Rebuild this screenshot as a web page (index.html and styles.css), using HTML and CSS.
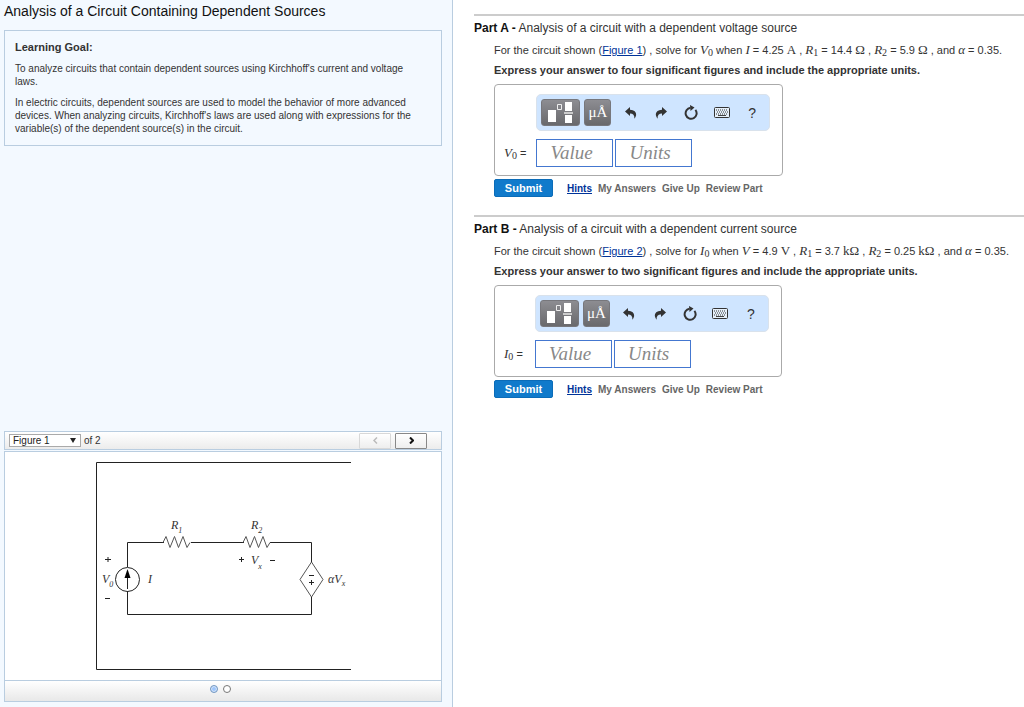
FILE: index.html
```html
<!DOCTYPE html>
<html lang="en">
<head>
  <meta charset="UTF-8" />
  <meta name="viewport" content="width=device-width, initial-scale=1.0"/>
  <title>Analysis of a Circuit Containing Dependent Sources</title>
  <link rel="stylesheet" href="styles.css">
</head>
<body>
<!-- shared toolbar icons -->
<svg class="sprite" aria-hidden="true">
  <symbol id="icon-template" viewBox="0 0 27 21">
    <path d="M1 8h8v12H1zM18 0h7v9h-7zM18 13h7v8h-7z" fill="#fff"/>
    <path d="M17 11h9" stroke="#ccc" stroke-width="2"/>
    <path d="M10.500 2.500h4v5h-4z" fill="none" stroke="#eee"/>
  </symbol>
  <symbol id="icon-undo" viewBox="0 0 12 12">
    <path d="M0 4.500L5 0v2.700c4 .1 6.600 2.300 6.100 5.600-.2 1.300-.8 2.500-1.700 3.500.3-3.400-1.300-5.200-4.400-5.200V9z" fill="#333"/>
  </symbol>
  <symbol id="icon-redo" viewBox="0 0 12 12">
    <path d="M12 4.500L7 0v2.700C3 2.800.4 5 .9 8.300c.2 1.300.8 2.500 1.700 3.500C2.300 8.400 3.900 6.600 7 6.600V9z" fill="#333"/>
  </symbol>
  <symbol id="icon-reset" viewBox="0 0 14 15">
    <path d="M11.400 4.800A5.500 5.500 0 1 1 6.500 2.800" fill="none" stroke="#333" stroke-width="2"/>
    <path d="M6 0l4.500 2.500L6.500 6z" fill="#333"/>
  </symbol>
  <symbol id="icon-keyboard" viewBox="0 0 16 11">
    <rect x=".5" y=".5" width="15" height="10" rx="1" fill="#e6f0fa" stroke="#333"/>
    <path d="M2 3h12M3 5h11M2 7h12" stroke="#333" stroke-dasharray="1 1"/>
    <path d="M4 8.500h8" stroke="#444"/>
  </symbol>
</svg>

<aside class="intro">
  <h1>Analysis of a Circuit Containing Dependent Sources</h1>
  <section class="goal">
    <h2>Learning Goal:</h2>
    <p>To analyze circuits that contain dependent sources using Kirchhoff's current and voltage laws.</p>
    <p>In electric circuits, dependent sources are used to model the behavior of more advanced devices. When analyzing circuits, Kirchhoff's laws are used along with expressions for the variable(s) of the dependent source(s) in the circuit.</p>
  </section>

  <section class="viewer">
    <div class="viewer-bar">
      <span class="select-wrap">
        <select id="figure" aria-label="Figure">
          <option>Figure 1</option>
          <option>Figure 2</option>
        </select>
      </span>
      <label for="figure">of 2</label>
      <button type="button" class="nav prev" aria-label="Previous figure" disabled>
        <svg width="5" height="7" viewBox="0 0 5 7"><path d="M4 .5l-3 3 3 3" fill="none" stroke="currentColor" stroke-width="1.500"/></svg>
      </button>
      <button type="button" class="nav next" aria-label="Next figure">
        <svg width="5" height="7" viewBox="0 0 5 7"><path d="M1 .5l3 3-3 3" fill="none" stroke="currentColor" stroke-width="2"/></svg>
      </button>
    </div>
    <div class="viewer-body">
      <svg class="circuit" width="255" height="208" viewBox="0 0 255 208">
        <path class="frame" d="M255 .5H.5v207H255"/>
        <!-- wires -->
        <path class="wire" d="M31.500 105V80.500H68M95 80.500h53M174 80.500h41.500V100M215.500 135v17.500h-184V129"/>
        <!-- resistors -->
        <path class="part" d="M67 80.500l3-6 4 11 4.500-11 4 11 4.500-11 4 11 3-5"/>
        <path class="part" d="M147 80.500l3-6 4 11 4.500-11 4 11 4.500-11 4 11 3-5"/>
        <!-- current source -->
        <circle class="wire" cx="31.500" cy="117.500" r="12"/>
        <path class="wire" d="M31.500 127v-16"/>
        <path d="M31.500 107l3 9h-6z"/>
        <!-- dependent source -->
        <path class="part" d="M215.500 100l11.500 17.500-11.500 17.500-11.500-17.500z"/>
        <path class="wire" d="M213 113.500h5M213 120.500h5M215.500 118v5"/>
        <!-- polarity marks -->
        <path class="wire" d="M9 97.500h6M12 95v5M9 136.500h5M143 97.500h5M145.500 95v5M174 98.500h5"/>
        <text x="75" y="67">R<tspan class="sub" dy="4">1</tspan></text>
        <text x="155" y="67">R<tspan class="sub" dy="4">2</tspan></text>
        <text x="155" y="102">V<tspan class="sub" dy="5">x</tspan></text>
        <text x="6" y="121">V<tspan class="sub" dy="4">0</tspan></text>
        <text x="52" y="121">I</text>
        <text x="232" y="121">αV<tspan class="sub" dy="3">x</tspan></text>
      </svg>
    </div>
    <div class="viewer-foot">
      <input type="radio" name="page" aria-label="Figure 1" checked>
      <input type="radio" name="page" aria-label="Figure 2">
    </div>
  </section>
</aside>

<main class="parts">
  <form class="part-item">
    <h2><b>Part A -</b> Analysis of a circuit with a dependent voltage source</h2>
    <p>For the circuit shown (<a href="#figure">Figure 1</a>) , solve for <var>V<sub>0</sub></var> when <var>I</var> = 4.25 <span class="unit">A</span> , <var>R<sub>1</sub></var> = 14.4 <span class="unit">Ω</span> , <var>R<sub>2</sub></var> = 5.9 <span class="unit">Ω</span> , and <var>α</var> = 0.35.</p>
    <p class="ask">Express your answer to four significant figures and include the appropriate units.</p>
    <div class="answer">
      <div class="toolbar">
        <button type="button" class="tool wide" aria-label="Templates"><svg width="27" height="21"><use href="#icon-template"/></svg></button>
        <button type="button" class="tool">μÅ</button>
        <button type="button" class="icon" aria-label="Undo"><svg width="12" height="12"><use href="#icon-undo"/></svg></button>
        <button type="button" class="icon" aria-label="Redo"><svg width="12" height="12"><use href="#icon-redo"/></svg></button>
        <button type="button" class="icon" aria-label="Reset"><svg width="14" height="15"><use href="#icon-reset"/></svg></button>
        <button type="button" class="icon" aria-label="Keyboard shortcuts"><svg width="16" height="11"><use href="#icon-keyboard"/></svg></button>
        <button type="button" class="icon">?</button>
      </div>
      <label for="valueA"><var>V<sub>0</sub></var> =</label>
      <div class="fields">
        <input type="text" id="valueA" placeholder="Value">
        <input type="text" aria-label="Units" placeholder="Units">
      </div>
    </div>
    <div class="actions">
      <button type="submit" class="btn">Submit</button>
      <a href="#" class="hints">Hints</a>
      <a href="#">My Answers</a>
      <a href="#">Give Up</a>
      <a href="#">Review Part</a>
    </div>
  </form>

  <form class="part-item">
    <h2><b>Part B -</b> Analysis of a circuit with a dependent current source</h2>
    <p>For the circuit shown (<a href="#figure">Figure 2</a>) , solve for <var>I<sub>0</sub></var> when <var>V</var> = 4.9 <span class="unit">V</span> , <var>R<sub>1</sub></var> = 3.7 <span class="unit">kΩ</span> , <var>R<sub>2</sub></var> = 0.25 <span class="unit">kΩ</span> , and <var>α</var> = 0.35.</p>
    <p class="ask">Express your answer to two significant figures and include the appropriate units.</p>
    <div class="answer">
      <div class="toolbar">
        <button type="button" class="tool wide" aria-label="Templates"><svg width="27" height="21"><use href="#icon-template"/></svg></button>
        <button type="button" class="tool">μÅ</button>
        <button type="button" class="icon" aria-label="Undo"><svg width="12" height="12"><use href="#icon-undo"/></svg></button>
        <button type="button" class="icon" aria-label="Redo"><svg width="12" height="12"><use href="#icon-redo"/></svg></button>
        <button type="button" class="icon" aria-label="Reset"><svg width="14" height="15"><use href="#icon-reset"/></svg></button>
        <button type="button" class="icon" aria-label="Keyboard shortcuts"><svg width="16" height="11"><use href="#icon-keyboard"/></svg></button>
        <button type="button" class="icon">?</button>
      </div>
      <label for="valueB"><var>I<sub>0</sub></var> =</label>
      <div class="fields">
        <input type="text" id="valueB" placeholder="Value">
        <input type="text" aria-label="Units" placeholder="Units">
      </div>
    </div>
    <div class="actions">
      <button type="submit" class="btn">Submit</button>
      <a href="#" class="hints">Hints</a>
      <a href="#">My Answers</a>
      <a href="#">Give Up</a>
      <a href="#">Review Part</a>
    </div>
  </form>
</main>
</body>
</html>
```
FILE: styles.css
```css
* {
  box-sizing: border-box;
}
body {
  margin: 0;
  min-height: 100vh;
  display: flex;
  font-family: "Liberation Sans", Arial, sans-serif;
  font-size: 11px;
  line-height: 13px;
  color: #333;
  background: #fff;
}
h1, h2, p {
  margin: 0;
  font-weight: normal;
}
button, input, select {
  font-family: inherit;
  margin: 0;
}
a {
  color: #039;
}
.sprite {
  position: absolute;
  width: 0;
  height: 0;
}

/* left column */
.intro {
  flex: 0 0 453px;
  display: flex;
  flex-direction: column;
  padding: 2px 10px 5px 4px;
  background: #f3f9ff;
  border-right: 1px solid #b9cde0;
}
h1 {
  font-size: 14px;
  line-height: 18px;
  color: #111;
}
.goal {
  margin-top: 10px;
  padding: 10px 20px 10px 10px;
  border: 1px solid #b9cde0;
}
.goal h2 {
  font-size: 11px;
  font-weight: bold;
}
.goal p {
  margin-top: 8px;
  font-size: 10px;
}

.viewer {
  margin-top: auto;
}
.viewer-bar {
  display: flex;
  align-items: center;
  height: 19px;
  padding: 0 14px 0 4px;
  border: 1px solid #b9cde0;
  background: linear-gradient(#fff, #ececec);
}
.select-wrap {
  position: relative;
  margin-right: 3px;
}
.select-wrap::after {
  content: "";
  position: absolute;
  right: 5px;
  top: 4px;
  border: 3px solid transparent;
  border-top: 5px solid #222;
  border-bottom: 0;
  pointer-events: none;
}
select {
  display: block;
  width: 72px;
  height: 13px;
  padding: 0 3px;
  border: 1px solid #aaa;
  border-radius: 0;
  background: #fff;
  color: #222;
  font-size: 10px;
  line-height: 11px;
  appearance: none;
}
.viewer-bar label {
  font-size: 10px;
}
.nav {
  display: flex;
  align-items: center;
  justify-content: center;
  width: 32px;
  height: 16px;
  padding: 0;
  border: 1px solid #888;
  border-radius: 1px;
  background: linear-gradient(#fff, #eee);
  color: #111;
}
.prev {
  margin: 0 4px 0 auto;
  border-color: #d8d8d8;
  color: #bbb;
}
.viewer-body {
  display: flex;
  justify-content: center;
  margin-top: 1px;
  padding: 10px 0;
  border: 1px solid #b9cde0;
  border-bottom: 0;
  background: #fff;
}
.viewer-foot {
  display: flex;
  justify-content: center;
  gap: 5px;
  height: 22px;
  padding: 4px 5px 0 0;
  border: 1px solid #b9cde0;
  background: linear-gradient(#fff, #e8e8e8);
}
.viewer-foot input {
  appearance: none;
  width: 8px;
  height: 8px;
  border: 1px solid #777;
  border-radius: 50%;
  background: #fff;
}
.viewer-foot input:checked {
  border-color: #789ac0;
  background: #9ec5fb;
  box-shadow: inset 0 0 0 1px #dbe9fb;
}

.circuit text {
  font: italic 12px "Liberation Serif", "Times New Roman", serif;
  fill: #333;
}
.circuit .sub {
  font-size: 8px;
}
.frame, .wire, .part {
  fill: none;
  stroke: #222;
}
.part {
  stroke: #555;
}

/* right column */
.parts {
  flex: 1;
  padding: 14px 0 0 21px;
}
.part-item {
  padding: 4px 0 18px 20px;
  border-top: 2px solid #ccc;
}
.part-item h2 {
  margin-left: -20px;
  font-size: 12px;
  line-height: 16px;
}
.part-item h2 b {
  color: #111;
}
.part-item p {
  margin-top: 6px;
  line-height: 16px;
}
.part-item .ask {
  font-weight: bold;
  line-height: 13px;
}
var, .unit {
  font-family: "Liberation Serif", "Times New Roman", serif;
  font-size: 13px;
  line-height: 1;
}
sub {
  font-size: 10px;
  font-style: normal;
  line-height: 1;
  vertical-align: -2px;
}
.answer {
  display: inline-grid;
  grid-template-columns: auto 234px;
  column-gap: 10px;
  row-gap: 8px;
  align-items: center;
  margin-top: 7px;
  padding: 9px 12px 8px 9px;
  border: 1px solid #aaa;
  border-radius: 4px;
  vertical-align: top;
}
.answer label {
  min-width: 21px;
}
.toolbar {
  grid-column: 2;
  display: flex;
  align-items: center;
  height: 37px;
  padding: 0 2px 0 4px;
  border: 1px solid #d9e2ec;
  border-radius: 5px;
  background: #cfe5ff;
}
.tool {
  display: flex;
  align-items: center;
  justify-content: center;
  width: 27px;
  height: 27px;
  margin-right: 4px;
  padding: 0;
  border: 1px solid #77777c;
  border-radius: 3px;
  background: linear-gradient(#8d8d92, #69696c);
  color: #fff;
  font-family: "Liberation Serif", "Times New Roman", serif;
  font-size: 15px;
}
.wide {
  width: 39px;
}
.icon {
  flex: 1;
  display: flex;
  align-items: center;
  justify-content: center;
  padding: 0;
  border: 0;
  background: none;
  color: #333;
  font-size: 14px;
}
.fields {
  display: flex;
  gap: 2px;
}
.fields input {
  width: 77px;
  height: 28px;
  padding: 0 13px;
  border: 1px solid #4477d0;
  font: italic 19px "Liberation Serif", "Times New Roman", serif;
}
.fields input::placeholder {
  color: #888;
}
.actions {
  display: flex;
  align-items: center;
  gap: 6px;
  margin-top: 3px;
  font-size: 10px;
  font-weight: bold;
}
.actions a {
  color: #666;
  text-decoration: none;
}
.actions .hints {
  margin-left: 8px;
  color: #039;
  text-decoration: underline;
}
.btn {
  width: 59px;
  height: 18px;
  padding: 0;
  border: 1px solid #0b6cb8;
  border-radius: 2px;
  background: #107acb;
  color: #fff;
  font-size: 11px;
  font-weight: bold;
}
```
